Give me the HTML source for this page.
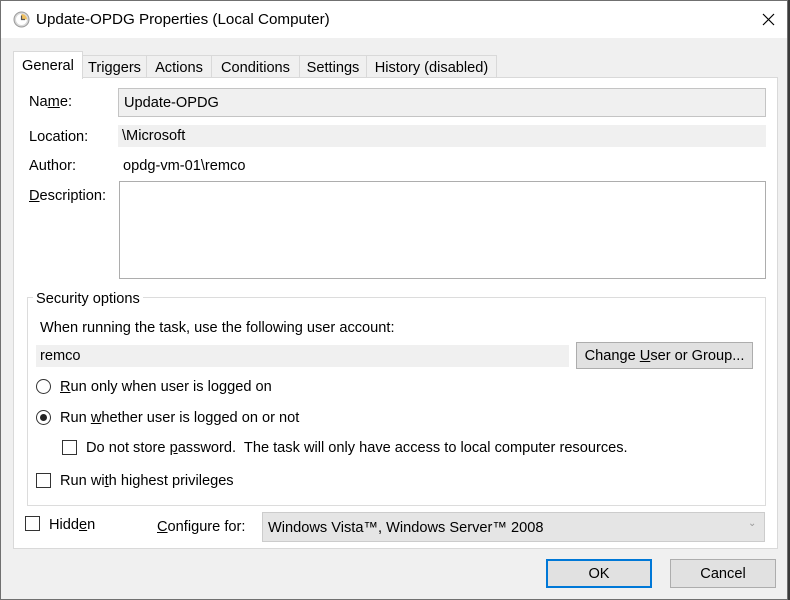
<!DOCTYPE html>
<html><head><style>
*{margin:0;padding:0;box-sizing:border-box}
body{width:790px;height:600px;background:#3a3a3a;font-family:"Liberation Sans",sans-serif;font-size:14.6px;color:#000;position:relative;overflow:hidden}
.a{position:absolute;white-space:nowrap}
#win{position:absolute;left:0;top:0;width:788px;height:600px;background:#f0f0f0}
#bd{position:absolute;left:0;top:0;width:788px;height:600px;border:1px solid #707070;pointer-events:none}
#title{position:absolute;left:1px;top:1px;width:786px;height:37px;background:#fff}
.tab{position:absolute;top:55px;height:23px;background:#f0f0f0;border:1px solid #d9d9d9;border-bottom:none;padding:4px 0 0 0;text-align:center}
#panel{position:absolute;left:13px;top:77px;width:765px;height:472px;background:#fff;border:1px solid #d9d9d9}
.fld{position:absolute;background:#f0f0f0}
.cb{position:absolute;width:15px;height:15px;border:1px solid #333;background:#fff}
.btn{position:absolute;background:#e1e1e1;border:1px solid #adadad;text-align:center}
u{text-decoration:underline}
</style></head><body>
<div id="win">
<div id="title">
<svg class="a" style="left:12px;top:10px" width="17" height="17" viewBox="0 0 17 17"><circle cx="8.5" cy="8.5" r="7.5" fill="#d8d8d8" stroke="#999"/><circle cx="8.5" cy="8.5" r="5.5" fill="#fff"/><path d="M8.5 3 A5.5 5.5 0 0 1 14 8.5 L8.5 8.5Z" fill="#f0c060"/><path d="M8.5 4.5V8.5H12" stroke="#555" stroke-width="1.2" fill="none"/></svg>
<div class="a" style="left:35px;top:10px;font-size:15.2px">Update-OPDG Properties (Local Computer)</div>
<svg class="a" style="left:761px;top:12px" width="13" height="13"><path d="M1 1L12 12M12 1L1 12" stroke="#000" stroke-width="1.2"/></svg>
</div>
<div class="tab" style="left:82px;width:65px">Triggers</div>
<div class="tab" style="left:146px;width:66px">Actions</div>
<div class="tab" style="left:211px;width:89px">Conditions</div>
<div class="tab" style="left:299px;width:68px">Settings</div>
<div class="tab" style="left:366px;width:131px">History (disabled)</div>
<div id="panel"></div>
<div class="a" style="left:13px;top:51px;width:70px;height:28px;background:#fff;border:1px solid #d9d9d9;border-bottom:none;padding:6px 0 0 8px">General</div>

<div class="a" style="left:29px;top:94px">Na<u>m</u>e:</div>
<div class="fld" style="left:118px;top:88px;width:648px;height:29px;border:1px solid #c4c4c4;padding:6px 0 0 5px">Update-OPDG</div>
<div class="a" style="left:29px;top:129px">Location:</div>
<div class="fld" style="left:118px;top:125px;width:648px;height:22px;padding:3px 0 0 4px">\Microsoft</div>
<div class="a" style="left:29px;top:158px">Author:</div>
<div class="a" style="left:123px;top:158px">opdg-vm-01\remco</div>
<div class="a" style="left:29px;top:188px"><u>D</u>escription:</div>
<div class="a" style="left:119px;top:181px;width:647px;height:98px;background:#fff;border:1px solid #adadad"></div>

<div class="a" style="left:27px;top:297px;width:739px;height:209px;border:1px solid #dcdcdc"></div>
<div class="a" style="left:33px;top:291px;background:#fff;padding:0 3px">Security options</div>
<div class="a" style="left:40px;top:320px">When running the task, use the following user account:</div>
<div class="fld" style="left:36px;top:345px;width:533px;height:22px;padding:3px 0 0 4px">remco</div>
<div class="btn" style="left:576px;top:342px;width:177px;height:27px;padding-top:5px">Change <u>U</u>ser or Group...</div>

<div class="a" style="left:36px;top:379px;width:15px;height:15px;border:1px solid #333;border-radius:50%;background:#fff"></div>
<div class="a" style="left:60px;top:379px"><u>R</u>un only when user is logged on</div>
<div class="a" style="left:36px;top:410px;width:15px;height:15px;border:1px solid #333;border-radius:50%;background:#fff"><div style="position:absolute;left:3px;top:3px;width:7px;height:7px;border-radius:50%;background:#222"></div></div>
<div class="a" style="left:60px;top:410px">Run <u>w</u>hether user is logged on or not</div>
<div class="cb" style="left:62px;top:440px"></div>
<div class="a" style="left:86px;top:440px">Do not store <u>p</u>assword.&nbsp; The task will only have access to local computer resources.</div>
<div class="cb" style="left:36px;top:473px"></div>
<div class="a" style="left:60px;top:473px">Run wi<u>t</u>h highest privileges</div>

<div class="cb" style="left:25px;top:516px"></div>
<div class="a" style="left:49px;top:517px">Hidd<u>e</u>n</div>
<div class="a" style="left:157px;top:519px"><u>C</u>onfigure for:</div>
<div class="fld" style="left:262px;top:512px;width:503px;height:30px;background:#e5e5e5;border:1px solid #ccc;padding:7px 0 0 5px">Windows Vista™, Windows Server™ 2008</div>
<div class="a" style="left:748px;top:518px;font-size:10px;color:#999">&#8964;</div>

<div class="btn" style="left:546px;top:559px;width:106px;height:29px;border:2px solid #0078d7;padding-top:5px">OK</div>
<div class="btn" style="left:670px;top:559px;width:106px;height:29px;padding-top:6px">Cancel</div>
<div id="bd"></div>
</div>
</body></html>
